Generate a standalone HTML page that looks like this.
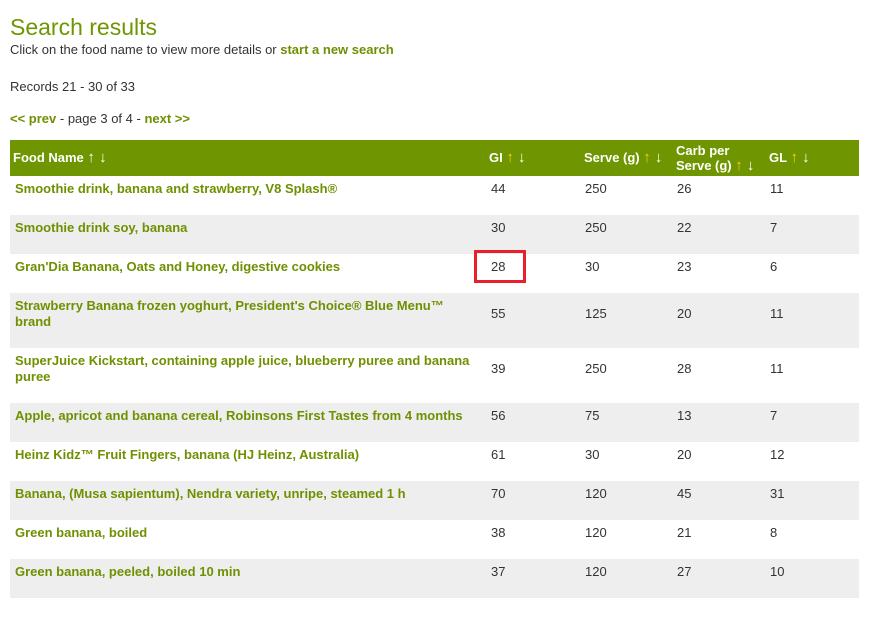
<!DOCTYPE html>
<html><head><meta charset="utf-8"><style>
body{margin:0;background:#fff;font-family:"Liberation Sans",Arial,sans-serif;font-size:13px;color:#333;width:883px;height:627px;position:relative;overflow:hidden}
.a{position:absolute;white-space:nowrap}
.g{color:#6f9000;font-weight:bold}
h1{position:absolute;left:10px;top:14px;margin:0;font-size:23px;font-weight:normal;color:#6f9600}
.hd{position:absolute;left:10px;top:140px;width:849px;height:36px;background:#6f9600}
.hd .a{color:#fff;font-weight:bold}
.ar{font-size:15px;font-weight:normal}
.y{color:#f5d400}
.row{position:absolute;left:10px;width:849px}
.row .a{top:5px;line-height:16px}
.row .n{left:5px;color:#6f9000;font-weight:bold}
.gr{background:#eee}
</style></head><body>
<h1>Search results</h1>
<div class="a" style="left:10px;top:42px">Click on the food name to view more details or <span class="g">start a new search</span></div>
<div class="a" style="left:10px;top:79px">Records 21 - 30 of 33</div>
<div class="a" style="left:10px;top:111px"><span class="g">&lt;&lt; prev</span> - page 3 of 4 - <span class="g">next &gt;&gt;</span></div>
<div class="hd">
<div class="a" style="left:3px;top:9px">Food Name <span class="ar">↑ ↓</span></div>
<div class="a" style="left:479px;top:9px">GI <span class="ar"><span class="y">↑</span> ↓</span></div>
<div class="a" style="left:574px;top:9px">Serve (g) <span class="ar"><span class="y">↑</span> ↓</span></div>
<div class="a" style="left:666px;top:3px;line-height:15px">Carb per<br>Serve (g) <span class="ar"><span class="y">↑</span> ↓</span></div>
<div class="a" style="left:759px;top:9px">GL <span class="ar"><span class="y">↑</span> ↓</span></div>
</div>
<div class="row" style="top:176px;height:39px"><div class="a n">Smoothie drink, banana and strawberry, V8 Splash®</div><div class="a" style="left:481px">44</div><div class="a" style="left:575px">250</div><div class="a" style="left:667px">26</div><div class="a" style="left:760px">11</div></div>
<div class="row gr" style="top:215px;height:39px"><div class="a n">Smoothie drink soy, banana</div><div class="a" style="left:481px">30</div><div class="a" style="left:575px">250</div><div class="a" style="left:667px">22</div><div class="a" style="left:760px">7</div></div>
<div class="row" style="top:254px;height:39px"><div class="a n">Gran'Dia Banana, Oats and Honey, digestive cookies</div><div class="a" style="left:481px">28</div><div class="a" style="left:575px">30</div><div class="a" style="left:667px">23</div><div class="a" style="left:760px">6</div></div>
<div class="row gr" style="top:293px;height:55px"><div class="a n" style="white-space:normal;width:460px">Strawberry Banana frozen yoghurt, President's Choice® Blue Menu™ brand</div><div class="a" style="left:481px;top:13px">55</div><div class="a" style="left:575px;top:13px">125</div><div class="a" style="left:667px;top:13px">20</div><div class="a" style="left:760px;top:13px">11</div></div>
<div class="row" style="top:348px;height:55px"><div class="a n" style="white-space:normal;width:460px">SuperJuice Kickstart, containing apple juice, blueberry puree and banana puree</div><div class="a" style="left:481px;top:13px">39</div><div class="a" style="left:575px;top:13px">250</div><div class="a" style="left:667px;top:13px">28</div><div class="a" style="left:760px;top:13px">11</div></div>
<div class="row gr" style="top:403px;height:39px"><div class="a n">Apple, apricot and banana cereal, Robinsons First Tastes from 4 months</div><div class="a" style="left:481px">56</div><div class="a" style="left:575px">75</div><div class="a" style="left:667px">13</div><div class="a" style="left:760px">7</div></div>
<div class="row" style="top:442px;height:39px"><div class="a n">Heinz Kidz™ Fruit Fingers, banana (HJ Heinz, Australia)</div><div class="a" style="left:481px">61</div><div class="a" style="left:575px">30</div><div class="a" style="left:667px">20</div><div class="a" style="left:760px">12</div></div>
<div class="row gr" style="top:481px;height:39px"><div class="a n">Banana, (Musa sapientum), Nendra variety, unripe, steamed 1 h</div><div class="a" style="left:481px">70</div><div class="a" style="left:575px">120</div><div class="a" style="left:667px">45</div><div class="a" style="left:760px">31</div></div>
<div class="row" style="top:520px;height:39px"><div class="a n">Green banana, boiled</div><div class="a" style="left:481px">38</div><div class="a" style="left:575px">120</div><div class="a" style="left:667px">21</div><div class="a" style="left:760px">8</div></div>
<div class="row gr" style="top:559px;height:39px"><div class="a n">Green banana, peeled, boiled 10 min</div><div class="a" style="left:481px">37</div><div class="a" style="left:575px">120</div><div class="a" style="left:667px">27</div><div class="a" style="left:760px">10</div></div>
<div style="position:absolute;left:474px;top:250px;width:46px;height:27px;border:3px solid #e8202a"></div>
</body></html>
